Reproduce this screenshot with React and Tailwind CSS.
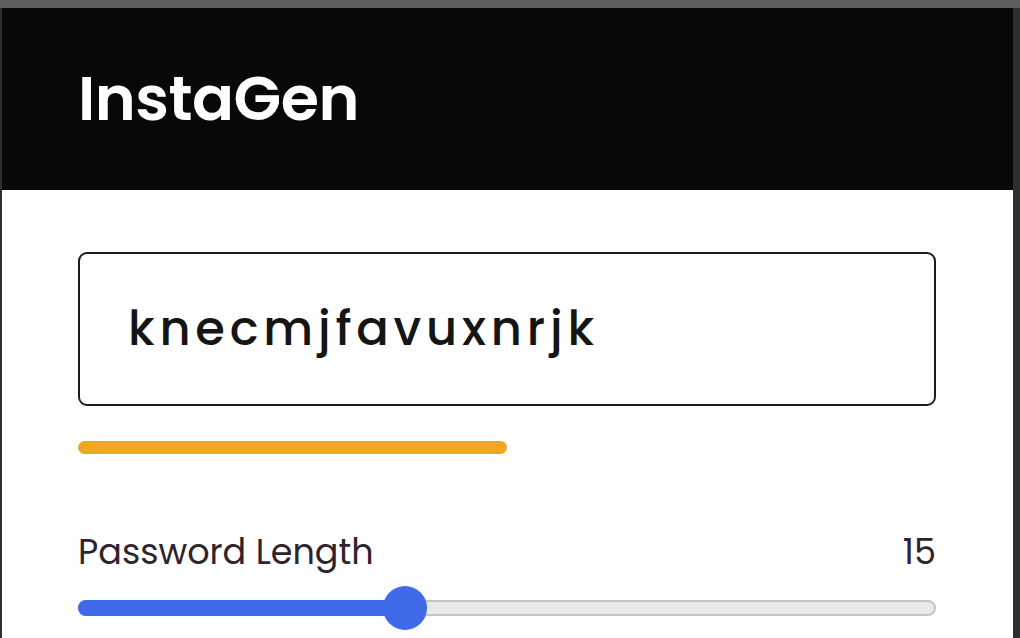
import React from 'react';

const font = { fontFamily: 'Poppins, Lato, "Noto Sans", sans-serif' };

const App = () => {
  const length = 15;
  const pct = 38;

  return (
    <div className="h-[638px] w-full overflow-hidden bg-[#2f2f2f]" style={font}>
      <div className="h-[8px] bg-[#5e5e5e]" />
      <div className="ml-[2px] mr-[7px] flex h-[630px] flex-col">
        <header className="flex h-[182px] shrink-0 items-center bg-[#080808] px-[76px]">
          <h1 className="text-[62px] font-semibold leading-none tracking-[-0.5px] text-white">InstaGen</h1>
        </header>

        <main className="flex-1 bg-white pl-[76px] pr-[77px] pt-[62px]">
          <div className="flex h-[154px] items-center rounded-[9px] border-2 border-[#1c1c1c] px-[48px]">
            <span className="text-[48px] font-medium tracking-[4.8px] text-[#151515]">knecmjfavuxnrjk</span>
          </div>

          <div className="mt-[35px] h-[13px] w-[429px] rounded-full bg-[#efa723]" />

          <div className="mt-[80px] flex items-baseline justify-between text-[35px] leading-none text-[#2e2430]">
            <span>Password Length</span>
            <span>{length}</span>
          </div>

          <div className="relative mt-[31px] h-[16px] rounded-full border-2 border-[#c4c4c4] bg-[#e9e9e9]">
            <div className="-m-[2px] h-[16px] rounded-full bg-[#3f6aea]" style={{ width: `${pct}%` }} />
            <div
              className="absolute top-1/2 h-[44px] w-[44px] -translate-x-1/2 -translate-y-1/2 rounded-full bg-[#3f6aea]"
              style={{ left: `${pct}%` }}
            />
          </div>
        </main>
      </div>
    </div>
  );
};

export default App;
